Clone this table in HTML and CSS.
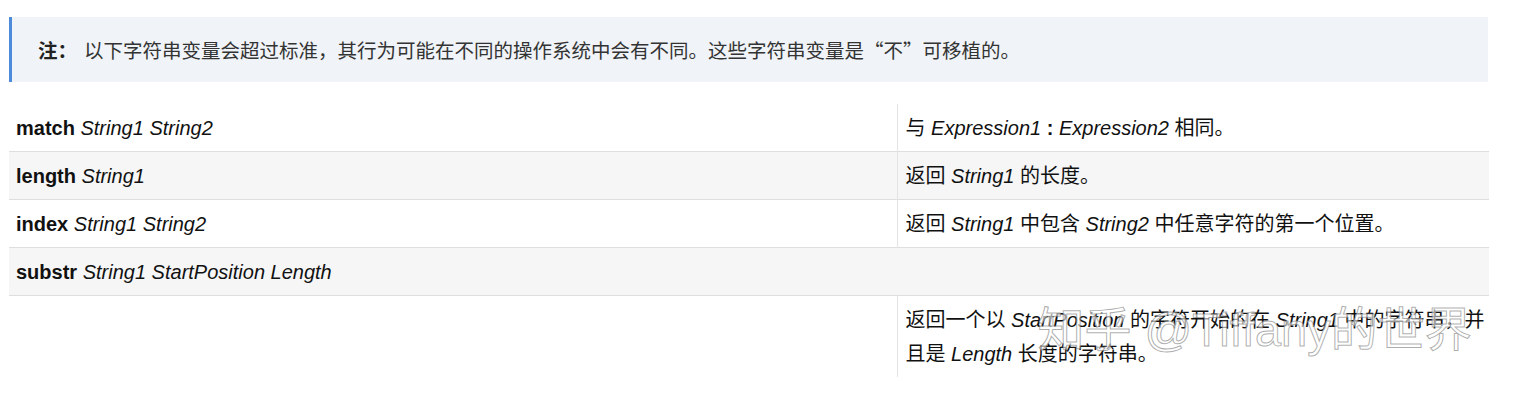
FILE: index.html
```html
<!DOCTYPE html>
<html lang="zh-CN">
<head>
<meta charset="utf-8">
<title>字符串变量</title>
<link rel="stylesheet" href="styles.css">
</head>
<body>
<div class="page">
  <div class="note">
    <strong class="note-label">注：</strong>
    <span>以下字符串变量会超过标准，其行为可能在不同的操作系统中会有不同。这些字符串变量是“不”可移植的。</span>
  </div>
  <table class="vars">
    <colgroup>
      <col class="col-a">
      <col class="col-b">
    </colgroup>
    <tbody>
      <tr>
        <td><b>match</b> <i>String1 String2</i></td>
        <td class="desc">与 <i>Expression1</i> <b>:</b> <i>Expression2</i> 相同。</td>
      </tr>
      <tr class="alt">
        <td><b>length</b> <i>String1</i></td>
        <td class="desc">返回 <i>String1</i> 的长度。</td>
      </tr>
      <tr>
        <td><b>index</b> <i>String1 String2</i></td>
        <td class="desc">返回 <i>String1</i> 中包含 <i>String2</i> 中任意字符的第一个位置。</td>
      </tr>
      <tr class="alt">
        <td colspan="2"><b>substr</b> <i>String1 StartPosition Length</i></td>
      </tr>
      <tr>
        <td></td>
        <td class="desc wm-cell">返回一个以 <i>StartPosition</i> 的字符开始的在 <i>String1</i> 中的字符串，并且是 <i>Length</i> 长度的字符串。<span class="watermark">知乎 @Tiffany的世界</span></td>
      </tr>
    </tbody>
  </table>
</div>
</body>
</html>
```

FILE: styles.css
```css
html, body {
  margin: 0;
  padding: 0;
  background: #ffffff;
}

.page {
  padding: 17px 27px 0 9px;
  font-family: "Liberation Sans", "Noto Sans CJK SC", sans-serif;
  color: #1a1a1a;
}

.note {
  display: flex;
  align-items: center;
  height: 65px;
  box-sizing: border-box;
  width: 1479px;
  background: #f0f3f8;
  border-left: 3px solid #4f8bdb;
  padding-left: 26px;
  font-family: "Noto Sans CJK SC", sans-serif;
  font-size: 19.5px;
  color: #333333;
}

.note-label {
  font-weight: bold;
  color: #222222;
  margin-right: 7px;
}

.vars {
  margin-top: 22px;
  width: 1480px;
  border-collapse: collapse;
  table-layout: fixed;
  font-size: 20px;
}

.col-a { width: 888px; }
.col-b { width: 592px; }

.vars td {
  padding: 7px 7px 6px 7px;
  line-height: 34px;
  vertical-align: top;
  color: #111111;
}

.vars tr + tr td {
  border-top: 1px solid #dedede;
}

.vars tr.alt td {
  background: #f6f6f6;
}

.vars td.desc {
  border-left: 1px solid #e4e4e4;
  padding-left: 8px;
  padding-right: 0;
  font-family: "Liberation Sans", "Noto Sans CJK SC", sans-serif;
}

.vars b {
  font-weight: bold;
}

.vars i {
  font-style: italic;
}

.wm-cell {
  position: relative;
}

.watermark {
  position: absolute;
  left: 140px;
  top: 4px;
  font-family: "Liberation Sans", "Noto Sans CJK SC", sans-serif;
  font-size: 47px;
  line-height: 60px;
  white-space: nowrap;
  color: rgba(255, 255, 255, 0.6);
  -webkit-text-stroke: 1px rgba(120, 120, 120, 0.6);
  pointer-events: none;
}
```
